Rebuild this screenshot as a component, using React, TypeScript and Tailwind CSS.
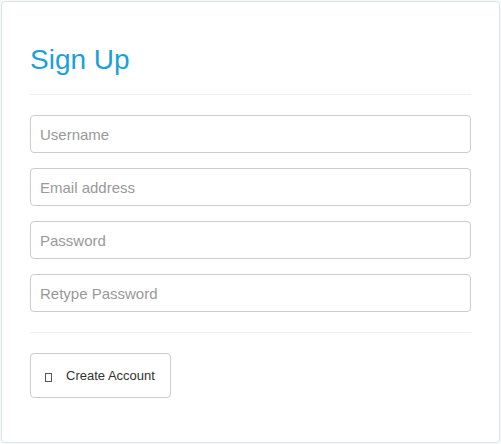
import React from "react";

export default function App() {
  const fields = ["Username", "Email address", "Password", "Retype Password"];
  return (
    <div className="w-[501px] h-[444px] p-px bg-[#f7fafa]" style={{ fontFamily: '"Liberation Sans", Arial, sans-serif' }}>
      <div className="h-full rounded-[4px] border border-[#dbe5e5] bg-white px-[28px] pt-[42px]">
        <h1 className="text-[28px] leading-[32px] text-[#1ba1d8] font-normal">Sign Up</h1>
        <div className="mt-[18px] h-px bg-[#eeeeee]" />
        <div className="mt-[20px] flex flex-col gap-[15px]">
          {fields.map((f) => (
            <input
              key={f}
              type={f.includes("Password") ? "password" : "text"}
              placeholder={f}
              className="h-[38px] w-full rounded-[4px] border border-[#cccccc] px-[9px] text-[15px] text-[#555] placeholder:text-[#999999] outline-none"
            />
          ))}
        </div>
        <div className="mt-[20px] h-px bg-[#eeeeee]" />
        <button className="mt-[20px] flex h-[45px] w-[141px] items-center rounded-[4px] border border-[#cccccc] bg-white pl-[14px] text-[13px] text-[#333333]">
          <span className="mr-[14px] mt-[3px] inline-block h-[9px] w-[7px] border border-[#555555]" />
          <span>Create Account</span>
        </button>
      </div>
    </div>
  );
}
